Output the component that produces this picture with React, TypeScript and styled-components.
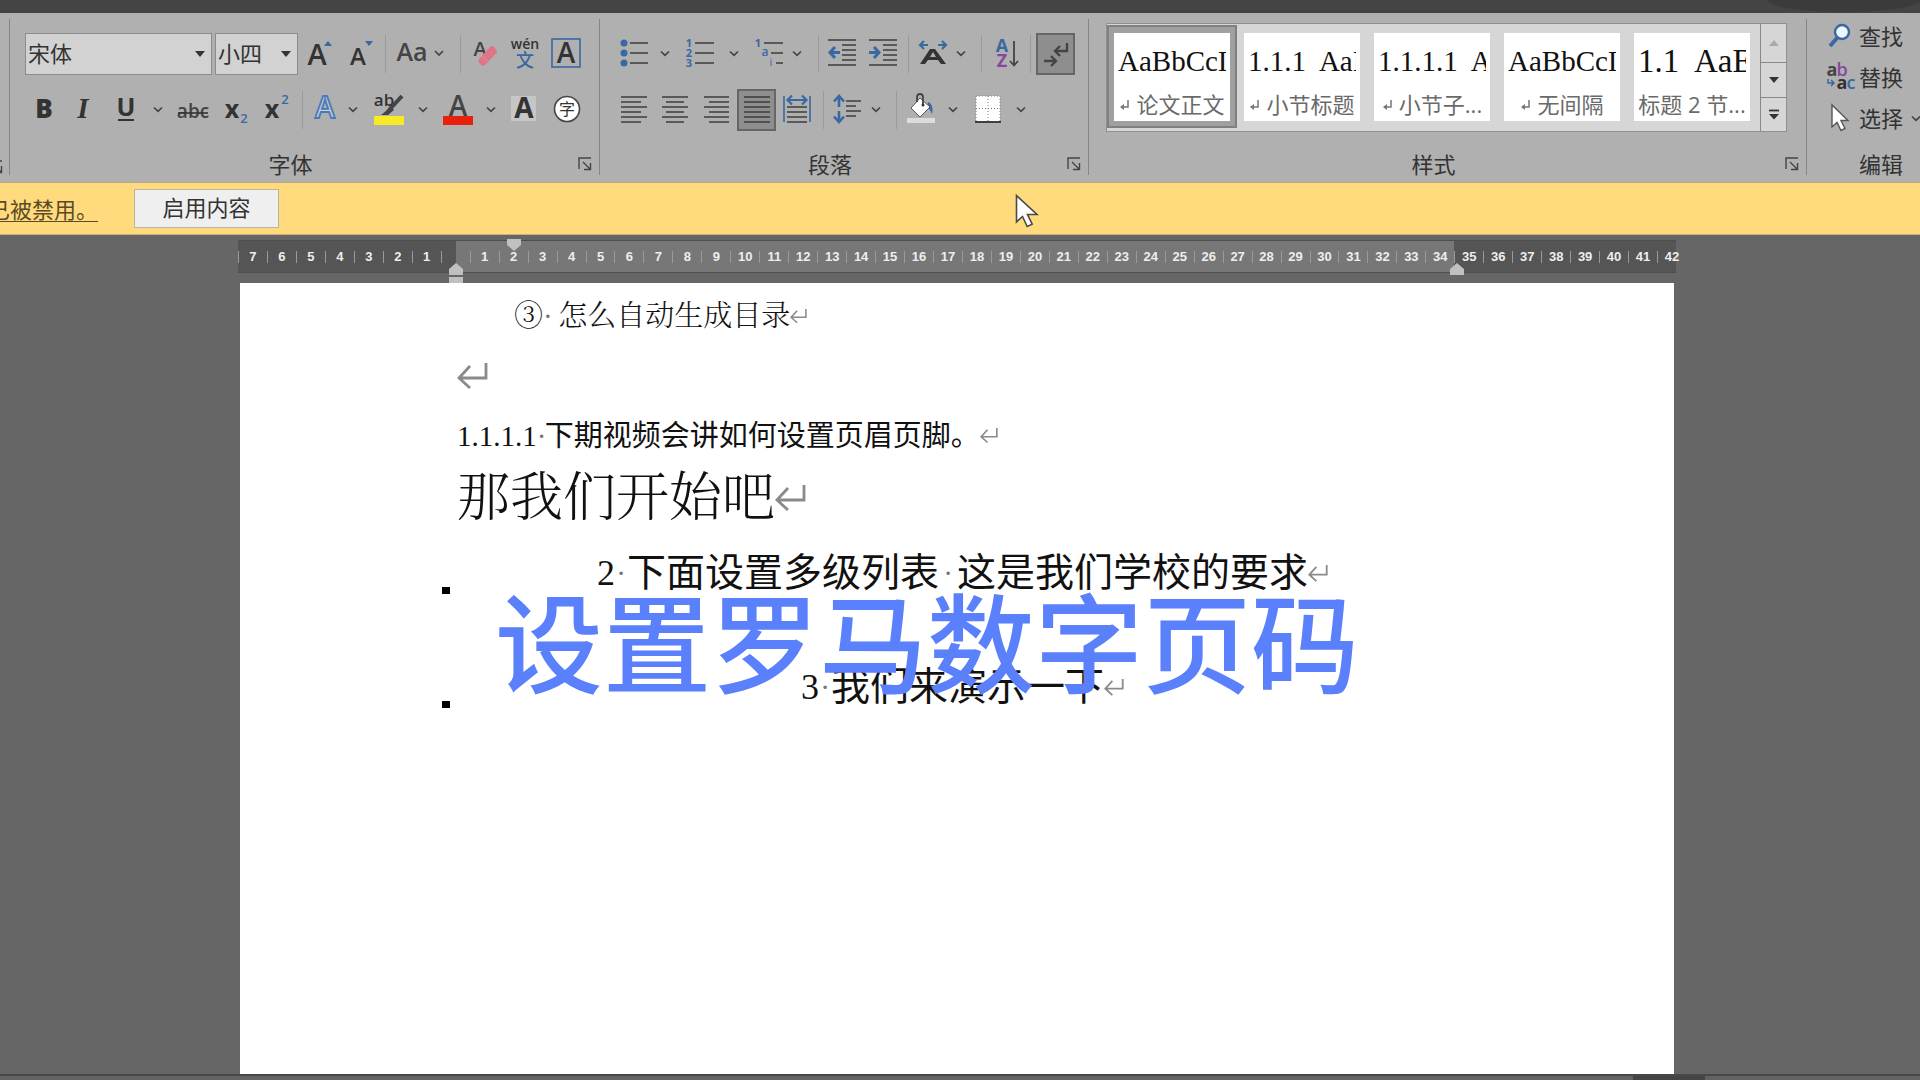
import React from 'react';
import styled, { createGlobalStyle, css } from 'styled-components';

const ui = `"Open Sans", "Noto Sans CJK SC", sans-serif`;
const serif = `"Liberation Serif", "Noto Serif CJK SC", "Noto Sans CJK SC", serif`;
const hei = `"Liberation Serif", "Noto Sans CJK SC", serif`;
const blue = '#3a68a0';
const ink = '#333';

const Global = createGlobalStyle`
  * { box-sizing: border-box; }
  body { margin: 0; background: #666; font-family: ${ui}; color: ${ink}; }
  button, select { font: inherit; color: inherit; padding: 0; margin: 0; border: 0; background: none; border-radius: 0; }
  svg { display: block; flex: none; overflow: visible; }
`;

const App_ = styled.div`
  display: flex;
  flex-direction: column;
  min-height: 100vh;
  overflow: hidden;
`;

const TitleBar = styled.header`
  display: flex;
  justify-content: flex-end;
  height: 13px;
  background: #444;
`;

const TitleShade = styled.div`
  width: 152px;
  height: 12px;
  background: #3b3b3b;
  border-radius: 0 0 76px 76px / 0 0 12px 12px;
`;

const Ribbon = styled.div`
  display: flex;
  padding: 6px 0 7px;
  background: #b0b0b0;
  border-bottom: 1px solid #b9a888;
  overflow: hidden;
`;

const Group = styled.section<{ $grow?: boolean }>`
  display: flex;
  flex-direction: column;
  flex: ${p => (p.$grow ? '1 0 auto' : '0 0 auto')};
  min-height: 156px;
  border-right: ${p => (p.$grow ? '0' : '1px solid #858585')};
`;

const PreviousGroup = styled(Group)`
  width: 10px;
  align-items: flex-end;
  justify-content: flex-end;
  padding: 0 6px 1px 0;
`;

const Tools = styled.div<{ $pad: string }>`
  display: flex;
  flex-direction: column;
  gap: 14px;
  padding: ${p => p.$pad};
`;

const Row = styled.div`
  display: flex;
  align-items: stretch;
  height: 42px;
`;

const Footer = styled.footer`
  display: flex;
  align-items: center;
  height: 22px;
  margin-top: auto;
  font-size: 22px;
  line-height: 22px;
  text-align: center;
`;

const FooterLabel = styled.span`
  flex: 1;
`;

const LauncherButton = styled.button`
  display: flex;
  justify-content: center;
  width: 28px;
`;

const Tool = styled.button<{ $w: number; $on?: boolean }>`
  display: flex;
  align-items: center;
  justify-content: center;
  flex: none;
  width: ${p => p.$w}px;
  padding-bottom: 2px;
  ${p => p.$on && css`
    background: #8e8e8e;
    border: 2px solid #666;
  `}
`;

const Sep = styled.span<{ $l: number; $r: number }>`
  flex: none;
  width: 1px;
  height: 38px;
  align-self: center;
  margin: 0 ${p => p.$r}px 0 ${p => p.$l}px;
  background: #9b9b9b;
`;

const Combo = styled.label<{ $w: number }>`
  display: flex;
  align-items: center;
  width: ${p => p.$w}px;
  padding-right: 6px;
  border: 1px solid #8c8c8c;
  background: #d2d2d2;
  & + & { margin-left: 3px; }
`;

const ComboSelect = styled.select`
  appearance: none;
  flex: 1;
  min-width: 0;
  height: 40px;
  padding: 0 0 2px 2px;
  font-size: 22px;
  outline: none;
`;

const Gallery = styled.div`
  display: flex;
  height: 109px;
  border: 1px solid #909090;
  background: #d6d6d6;
`;

const StyleItem = styled.button<{ $on?: boolean }>`
  width: 130px;
  height: 103px;
  margin-top: 1px;
  padding: 5px;
  border: 2px solid ${p => (p.$on ? '#808080' : 'transparent')};
  background: ${p => (p.$on ? '#a0a0a0' : 'transparent')};
`;

const StyleCard = styled.span`
  display: flex;
  flex-direction: column;
  height: 88px;
  padding: 0 4px;
  background: #fff;
  overflow: hidden;
`;

const Sample = styled.span<{ $big?: boolean }>`
  height: 55px;
  overflow: hidden;
  white-space: pre;
  text-align: left;
  font-family: "Liberation Serif", serif;
  font-size: ${p => (p.$big ? 33 : 29)}px;
  line-height: 57px;
  color: #111;
`;

const Caption = styled.span`
  display: flex;
  align-items: center;
  justify-content: center;
  gap: 7px;
  white-space: nowrap;
  font-size: 22px;
  line-height: 32px;
  color: #6a6a6a;
`;

const GalleryBar = styled.div`
  display: grid;
  grid-template-rows: 38px 35px 1fr;
  width: 26px;
  margin-left: 3px;
  border-left: 1px solid #888;
`;

const GalleryArrow = styled.button`
  display: flex;
  align-items: center;
  justify-content: center;
  & + & { border-top: 1px solid #888; }
`;

const EditRow = styled.button`
  display: flex;
  align-items: center;
  height: 41px;
  padding: 0 0 7px 19px;
  font-size: 22px;
  line-height: 32px;
  white-space: nowrap;
`;

const EditIcon = styled.span`
  width: 33px;
`;

const EditChevron = styled.span`
  margin-left: 8px;
`;

const EditFooter = styled(Footer)`
  padding-left: 52px;
`;

const Notice = styled.div`
  position: relative;
  display: flex;
  align-items: center;
  height: 52px;
  background: #ffdb7e;
  border-bottom: 1px solid #c9b27a;
  font-size: 22px;
  overflow: hidden;
`;

const NoticeLink = styled.a`
  width: 98px;
  display: flex;
  justify-content: flex-end;
  padding-bottom: 2px;
  white-space: nowrap;
  color: #5a4a25;
  text-decoration: underline;
  text-underline-offset: 3px;
  text-decoration-thickness: 1px;
`;

const EnableButton = styled.button`
  width: 145px;
  height: 39px;
  margin-left: 36px;
  padding-bottom: 5px;
  border: 1px solid #b9b4a4;
  background: #efefef;
`;

const Pointer = styled.span`
  position: absolute;
  left: 1015px;
  top: 11px;
`;

const Desk = styled.main`
  display: flex;
  flex: 1;
  flex-direction: column;
  align-items: center;
  padding: 5px 6px 0 0;
`;

const Ruler = styled.div`
  position: relative;
  width: 1438px;
  height: 33px;
  margin-bottom: 10px;
  border: solid #4e4e4e;
  border-width: 1px 0;
  background: linear-gradient(90deg, #555 218px, #777 218px, #777 1216px, #555 1216px);
`;

const Scale = styled.div`
  display: grid;
  grid-template-columns: repeat(50, 1fr);
  width: 1448px;
  padding-top: 10px;
`;

const Mark = styled.span`
  height: 12px;
  border-left: 1px solid #9a9a9a;
  font-family: "Liberation Sans", sans-serif;
  font-weight: bold;
  font-size: 13px;
  line-height: 12px;
  text-align: center;
  color: #eee;
`;

const Marker = styled.svg<{ $x: number; $y: number }>`
  position: absolute;
  left: ${p => p.$x}px;
  top: ${p => p.$y}px;
`;

const Page = styled.article`
  position: relative;
  flex: 1;
  width: 1434px;
  padding: 3px 220px 0 217px;
  background: #fff;
  font-family: ${serif};
  color: #111;
`;

const Para = styled.p<{ $size: number; $indent?: number; $top?: number; $hei?: boolean; $light?: boolean }>`
  display: flex;
  align-items: center;
  height: 60px;
  margin: ${p => p.$top || 0}px 0 0;
  padding-left: ${p => p.$indent || 0}px;
  white-space: pre;
  font-family: ${p => (p.$hei ? hei : serif)};
  font-size: ${p => p.$size}px;
  line-height: 60px;
  font-weight: ${p => (p.$light ? 300 : 400)};
`;

const Heading = styled.h2<{ $top: number }>`
  display: flex;
  height: 60px;
  margin: ${p => p.$top}px 0 0;
  font-family: ${hei};
  font-size: 39px;
  font-weight: 400;
  line-height: 60px;
  white-space: pre;
  &::before {
    content: '';
    width: 8px;
    height: 7px;
    margin: 0 7px 9px -15px;
    align-self: flex-end;
    background: #000;
  }
`;

const HeadingText = styled.span`
  display: flex;
  flex: 1;
  align-items: center;
  justify-content: center;
  padding-left: 14px;
`;

const HeadingDigit = styled.span`
  font-size: 36px;
`;

const Dot = styled.span<{ $w?: number }>`
  width: ${p => p.$w || 8}px;
  text-align: center;
  font-size: 29px;
  color: #777;
`;

const Title = styled.div`
  position: absolute;
  left: 255px;
  top: 301px;
  white-space: nowrap;
  font-family: "Noto Sans CJK SC", sans-serif;
  font-weight: 500;
  font-size: 108px;
  line-height: 108px;
  color: #5b80fc;
`;

const StatusBar = styled.footer`
  display: flex;
  justify-content: flex-end;
  height: 6px;
  padding-right: 215px;
  border-top: 2px solid #484848;
  background: #636363;
`;

const StatusThumb = styled.div`
  width: 72px;
  background: #444;
`;

/* ---------- icons ---------- */

const T = ({ x, y, s, c = ink, w = 400, a = 'middle', children, f = 'Open Sans, Noto Sans CJK SC, sans-serif', i }: any) => (
  <text x={x} y={y} fontSize={s} fill={c} fontWeight={w} textAnchor={a} fontFamily={f} fontStyle={i ? 'italic' : undefined}>{children}</text>
);

const Icon = ({ w = 30, h = 32, children }: any) => (
  <svg width={w} height={h} viewBox={`0 0 ${w} ${h}`} fill="none" stroke="none" aria-hidden="true">{children}</svg>
);

const Chevron = () => (
  <svg width="10" height="7" viewBox="0 0 10 7" fill="none" aria-hidden="true"><path d="M1 1.5 5 5.3 9 1.5" stroke="#444" strokeWidth="1.7" /></svg>
);

const Triangle = ({ c = ink, up }: { c?: string; up?: boolean }) => (
  <svg width="10" height="6" viewBox="0 0 10 6" aria-hidden="true"><path d={up ? 'M0 6h10L5 0z' : 'M0 0h10L5 6z'} fill={c} /></svg>
);

const Lines = ({ d }: { d: string }) => <path d={d} stroke="#3c3c3c" strokeWidth="1.6" />;

const Launcher = () => (
  <svg width="14" height="14" viewBox="0 0 14 14" fill="none" stroke="#444" strokeWidth="1.4" aria-hidden="true">
    <path d="M1 12V1h12M5 5l7 7M12.5 6v6.5H6" />
  </svg>
);

const Return = ({ w, c = '#8a8a8a' }: { w: number; c?: string }) => (
  <svg width={w} height={w * 0.84} viewBox="0 0 31 26" fill="none" stroke={c} strokeWidth="2.8" aria-hidden="true">
    <path d="M29 0v15H2M13 3 2 15l11 10" />
  </svg>
);

const SmallReturn = () => (
  <svg width="10" height="12" viewBox="0 0 10 12" fill="none" stroke="#777" strokeWidth="1.5" aria-hidden="true">
    <path d="M9 2v7H2" /><path d="M5 6v6L1 9z" fill="#777" stroke="none" />
  </svg>
);

const ChevronTool = ({ w = 20, label }: { w?: number; label: string }) => (
  <Tool $w={w} aria-label={label}><Chevron /></Tool>
);

const AlignLines = ({ l, r, sl, sr }: { l: number; r: number; sl: number; sr: number }) => (
  <Icon w={26} h={28}>
    <Lines d={[0, 1, 2, 3, 4, 5].map(n => `M${n % 2 ? sl : l} ${2 + n * 5}H${n % 2 ? sr : r}`).join('')} />
  </Icon>
);

const styles = [
  { sample: 'AaBbCcI', name: '论文正文', mark: true, on: true },
  { sample: '1.1.1  AaI', name: '小节标题', mark: true },
  { sample: '1.1.1.1  A', name: '小节子...', mark: true },
  { sample: 'AaBbCcI', name: '无间隔', mark: true },
  { sample: '1.1  AaE', name: '标题 2 节...', big: true },
];

const scale = Array.from({ length: 50 }, (_, n) => (n === 7 ? '' : String(Math.abs(n - 7))));

const ArrowPointer = ({ w, h }: { w: number; h: number }) => (
  <svg width={w} height={h} viewBox="0 0 24 34" aria-hidden="true">
    <path d="M1.500 1.500V28l6-5.500 4.700 10 5-2.300-4.700-9.700H22z" fill="#fff" stroke="#4a4a4a" strokeWidth="1.6" />
  </svg>
);

export default function App() {
  return (
    <App_>
      <Global />
      <TitleBar><TitleShade /></TitleBar>
      <Ribbon>
        <PreviousGroup><Launcher /></PreviousGroup>

        <Group>
          <Tools $pad="14px 11px 0 15px">
            <Row>
              <Combo $w={187}>
                <ComboSelect aria-label="字体"><option>宋体</option></ComboSelect><Triangle />
              </Combo>
              <Combo $w={83}>
                <ComboSelect aria-label="字号"><option>小四</option></ComboSelect><Triangle />
              </Combo>
              <Tool $w={46} aria-label="增大字号">
                <Icon w={26}><T x={9} y={28} s={29} w={600}>A</T><path d="M16 9h8l-4-5z" fill={blue} /></Icon>
              </Tool>
              <Tool $w={36} aria-label="减小字号">
                <Icon w={24}><T x={8} y={28} s={24} w={600}>A</T><path d="M15 4h8l-4 5z" fill={blue} /></Icon>
              </Tool>
              <Sep $l={5} $r={4} />
              <Tool $w={66} aria-label="更改大小写">
                <Icon w={52}><T x={15} y={24} s={25} w={600} c="#444">Aa</T><path d="M38 14l4 4 4-4" stroke="#444" strokeWidth="1.7" /></Icon>
              </Tool>
              <Sep $l={4} $r={4} />
              <Tool $w={41} aria-label="清除格式">
                <Icon w={26}>
                  <T x={7} y={19} s={20} w={600} c="#444">A</T>
                  <path d="M6 22 17 10q2-2 4 0l2 2.500q2 2 0 4L12 28q-2 1.500-4 0l-2-2.500q-1.500-2 0-3.500z" fill="#e07585" />
                  <path d="m9 19 7 6" stroke="#c9a0a8" />
                </Icon>
              </Tool>
              <Tool $w={38} aria-label="拼音指南">
                <Icon w={30} h={34}><T x={15} y={13} s={14} w={600}>wén</T><T x={15} y={31} s={18} c={blue} w={500}>文</T></Icon>
              </Tool>
              <Tool $w={44} aria-label="字符边框">
                <Icon w={30} h={30}><rect x="1" y="1" width="28" height="28" stroke={blue} strokeWidth="1.6" /><T x={15} y={25} s={28} w={600}>A</T></Icon>
              </Tool>
            </Row>
            <Row>
              <Tool $w={37} aria-label="加粗"><Icon><T x={15} y={25} s={26} w={800}>B</T></Icon></Tool>
              <Tool $w={42} aria-label="倾斜"><Icon><T x={15} y={25} s={29} w={700} f="Liberation Serif, serif" i>I</T></Icon></Tool>
              <Tool $w={44} aria-label="下划线"><Icon><T x={15} y={23} s={25} w={700}>U</T><path d="M7 27h16" stroke={ink} strokeWidth="2" /></Icon></Tool>
              <ChevronTool label="下划线选项" />
              <Tool $w={50} aria-label="删除线"><Icon w={32}><T x={16} y={25} s={19} w={600} c="#444">abc</T><path d="M1 20h30" stroke={ink} strokeWidth="1.6" /></Icon></Tool>
              <Tool $w={38} aria-label="下标"><Icon w={26}><T x={8} y={25} s={25} w={700}>x</T><T x={20} y={30} s={13} c={blue} w={600}>2</T></Icon></Tool>
              <Tool $w={42} aria-label="上标"><Icon w={26}><T x={8} y={25} s={25} w={700}>x</T><T x={21} y={11} s={13} c={blue} w={600}>2</T></Icon></Tool>
              <Sep $l={4} $r={4} />
              <Tool $w={36} aria-label="文本效果">
                <Icon><text x="15" y="25" fontSize="30" fontWeight="600" textAnchor="middle" fontFamily="Open Sans, sans-serif" fill="#c6cfda" stroke="#4a7ab5" strokeWidth="1.8">A</text></Icon>
              </Tool>
              <ChevronTool label="文本效果选项" />
              <Tool $w={50} aria-label="突出显示">
                <Icon w={28} h={34}>
                  <T x={10} y={14} s={17} w={600}>ab</T>
                  <path d="M28 4 17 16" stroke="#444" strokeWidth="4" /><path d="m16 14 4 4-6 5H7q5-3 9-9z" fill="#444" />
                  <path d="M0 24h30v9H0z" fill="#f8ea25" />
                </Icon>
              </Tool>
              <ChevronTool label="突出显示颜色" />
              <Tool $w={48} aria-label="字体颜色">
                <Icon w={28} h={34}><T x={15} y={24} s={28} w={600} c="#444">A</T><path d="M0 24h30v9H0z" fill="#e8210c" /></Icon>
              </Tool>
              <ChevronTool label="字体颜色选项" />
              <Tool $w={46} aria-label="字符底纹">
                <Icon w={26} h={28}><path d="M0 1h25v25H0z" fill="#c6c6c6" /><T x={13} y={23} s={28} w={700}>A</T></Icon>
              </Tool>
              <Tool $w={40} aria-label="带圈字符">
                <Icon w={28} h={28}><circle cx="14" cy="14" r="12.500" fill="#fff" stroke="#444" strokeWidth="1.6" /><T x={14} y={20} s={16}>字</T></Icon>
              </Tool>
            </Row>
          </Tools>
          <Footer><FooterLabel>字体</FooterLabel><LauncherButton aria-label="字体设置"><Launcher /></LauncherButton></Footer>
        </Group>

        <Group>
          <Tools $pad="14px 13px 0 14px">
            <Row>
              <Tool $w={40} aria-label="项目符号">
                <Icon w={28}>
                  <g fill={blue}><circle cx="4" cy="6" r="3.500" /><circle cx="4" cy="16" r="3.500" /><circle cx="4" cy="26" r="3.500" /></g>
                  <Lines d="M10 6h18M10 16h18M10 26h18" />
                </Icon>
              </Tool>
              <ChevronTool w={22} label="项目符号选项" />
              <Tool $w={48} aria-label="编号">
                <Icon w={28}><T x={3} y={10} s={11} c={blue} w={700}>1</T><T x={3} y={20} s={11} c={blue} w={700}>2</T><T x={3} y={30} s={11} c={blue} w={700}>3</T><Lines d="M9 6h19M9 16h19M9 26h19" /></Icon>
              </Tool>
              <ChevronTool label="编号选项" />
              <Tool $w={43} aria-label="多级列表">
                <Icon w={34}><T x={9} y={10} s={11} c={blue} w={700}>1</T><T x={16} y={19} s={12} c={blue} w={600}>a</T><T x={22} y={29} s={11} c={blue}>i</T><Lines d="M15 6h19M22 16h12M27 26h7" /></Icon>
              </Tool>
              <ChevronTool label="多级列表选项" />
              <Sep $l={11} $r={3} />
              <Tool $w={40} aria-label="减少缩进量">
                <Icon w={28}><Lines d="M0 3h28M14 8h14M14 13h14M14 18h14M14 23h14M0 28h28" /><path d="M12 15.500H2M7 10l-5 5.500L7 21" stroke={blue} strokeWidth="3" /></Icon>
              </Tool>
              <Tool $w={42} aria-label="增加缩进量">
                <Icon w={28}><Lines d="M0 3h28M14 8h14M14 13h14M14 18h14M14 23h14M0 28h28" /><path d="M0 15.500h10M5 10l5 5.500L5 21" stroke={blue} strokeWidth="3" /></Icon>
              </Tool>
              <Sep $l={4} $r={4} />
              <Tool $w={40} aria-label="中文版式">
                <Icon w={30}>
                  <path d="M2 27 12 12h5l11 15h-5l-3-4H10l-3 4zm10-7h6l-3-5z" fill={ink} fillRule="evenodd" />
                  <path d="M10 8H2M6 4 2 8l4 4M20 8h8M24 4l4 4-4 4" stroke={blue} strokeWidth="2.200" />
                </Icon>
              </Tool>
              <ChevronTool w={16} label="中文版式选项" />
              <Sep $l={12} $r={5} />
              <Tool $w={40} aria-label="排序">
                <Icon w={26}><T x={8} y={15} s={18} c={blue} w={700}>A</T><T x={8} y={30} s={18} c="#86479c" w={700}>Z</T><path d="M20 4v24M16 24l4 4.500 4-4.500" stroke="#444" strokeWidth="1.8" /></Icon>
              </Tool>
              <Sep $l={3} $r={5} />
              <Tool $w={39} $on aria-label="显示编辑标记">
                <Icon w={28}><path d="M25 6v8H13M18 9l-5 5 5 5M2 24h12M9 19l5 5-5 5" stroke="#444" strokeWidth="2.400" /></Icon>
              </Tool>
            </Row>
            <Row>
              <Tool $w={40} aria-label="左对齐"><AlignLines l={0} r={26} sl={0} sr={20} /></Tool>
              <Tool $w={42} aria-label="居中"><AlignLines l={0} r={26} sl={4} sr={22} /></Tool>
              <Tool $w={41} aria-label="右对齐"><AlignLines l={0} r={25} sl={5} sr={25} /></Tool>
              <Tool $w={39} $on aria-label="两端对齐"><AlignLines l={0} r={26} sl={0} sr={26} /></Tool>
              <Tool $w={42} aria-label="分散对齐">
                <Icon w={28} h={30}><path d="M1 2v26M27 2v26" stroke={blue} strokeWidth="1.6" /><path d="M5 6h18M9 1.500 4.500 6 9 10.500M19 1.500 23.500 6 19 10.500" stroke={blue} strokeWidth="2.200" /><Lines d="M4 13h20M4 18h20M4 23h20M4 28h20" /></Icon>
              </Tool>
              <Sep $l={5} $r={4} />
              <Tool $w={38} aria-label="行距">
                <Icon w={28} h={30}><path d="M6 3v10M1 7.500 6 2l5 5.500M6 17v10M1 22.500 6 28l5-5.500" stroke={blue} strokeWidth="2.600" /><Lines d="M13 7h15M13 12h10M13 17h15M13 22h10" /></Icon>
              </Tool>
              <ChevronTool label="行距选项" />
              <Sep $l={10} $r={4} />
              <Tool $w={40} aria-label="底纹">
                <Icon w={28}>
                  <path d="M21 9q6 2 4 12-2-5-5-7z" fill={blue} />
                  <path d="M13 5 4 15l9 9 10-10z" fill="#fff" stroke="#555" /><path d="M10 9V4q0-3 3-3t3 3v8" stroke="#444" strokeWidth="1.800" /><circle cx="16" cy="12" r="1.500" fill="#333" />
                  <path d="M0 25h28v5H0z" fill="#dcdcdc" />
                </Icon>
              </Tool>
              <ChevronTool w={24} label="底纹颜色" />
              <Tool $w={46} aria-label="边框">
                <Icon w={26} h={28}><path d="M1 1h24v25H1z" fill="#fff" /><path d="M1 1h24M1 1v25M25 1v25M13 1v25M1 13.500h24" stroke="#777" strokeDasharray="1 2" /><path d="M0 27h26" stroke="#333" strokeWidth="1.800" /></Icon>
              </Tool>
              <ChevronTool label="边框选项" />
            </Row>
          </Tools>
          <Footer><FooterLabel>段落</FooterLabel><LauncherButton aria-label="段落设置"><Launcher /></LauncherButton></Footer>
        </Group>

        <Group>
          <Tools $pad="4px 19px 0 17px">
            <Gallery>
              {styles.map((s, n) => (
                <StyleItem key={n} $on={s.on}>
                  <StyleCard>
                    <Sample $big={s.big}>{s.sample}</Sample>
                    <Caption>{s.mark && <SmallReturn />}{s.name}</Caption>
                  </StyleCard>
                </StyleItem>
              ))}
              <GalleryBar>
                <GalleryArrow aria-label="上一行"><Triangle up c="#aaa" /></GalleryArrow>
                <GalleryArrow aria-label="下一行"><Triangle /></GalleryArrow>
                <GalleryArrow aria-label="其他样式"><Icon w={12} h={12}><path d="M1 1.500h10" stroke={ink} strokeWidth="1.800" /><path d="M1 5h10l-5 5.500z" fill={ink} /></Icon></GalleryArrow>
              </GalleryBar>
            </Gallery>
          </Tools>
          <Footer><FooterLabel>样式</FooterLabel><LauncherButton aria-label="样式设置"><Launcher /></LauncherButton></Footer>
        </Group>

        <Group $grow>
          <EditRow>
            <EditIcon><Icon w={28} h={26}><path d="m12 14-8 9" stroke={blue} strokeWidth="4" /><circle cx="16" cy="9" r="7" fill="#eef6ff" stroke={blue} strokeWidth="2.400" /></Icon></EditIcon>查找
          </EditRow>
          <EditRow>
            <EditIcon><Icon w={30} h={30}><T x={6} y={14} s={18} w={700} c="#444">a</T><T x={16} y={14} s={18} w={600} c="#86479c">b</T><T x={16} y={27} s={18} w={700}>a</T><T x={25} y={27} s={18} w={600} c={blue}>c</T><path d="M2 17v4h6M5 18l3 3-3 3" stroke={blue} strokeWidth="1.500" /></Icon></EditIcon>替换
          </EditRow>
          <EditRow>
            <EditIcon><Icon w={26} h={28}><path d="M6 1v22l5-4.500 4 8 4-2-4-8h7z" fill="#fff" stroke="#555" strokeWidth="1.400" /></Icon></EditIcon>选择
            <EditChevron><Chevron /></EditChevron>
          </EditRow>
          <EditFooter>编辑</EditFooter>
        </Group>
      </Ribbon>

      <Notice>
        <NoticeLink href="#">已被禁用。</NoticeLink>
        <EnableButton>启用内容</EnableButton>
        <Pointer><ArrowPointer w={24} h={34} /></Pointer>
      </Notice>

      <Desk>
        <Ruler>
          <Scale>{scale.map((n, k) => <Mark key={k}>{n}</Mark>)}</Scale>
          <Marker $x={269} $y={-2} width="14" height="12"><path d="M0 0h14v6l-7 6-7-6z" fill="#c0c0c0" /></Marker>
          <Marker $x={211} $y={22} width="14" height="20"><path d="M0 12V6l7-6 7 6v6zM0 14h14v6H0z" fill="#c0c0c0" /></Marker>
          <Marker $x={1212} $y={22} width="14" height="12"><path d="M0 12V6l7-6 7 6v6z" fill="#c0c0c0" /></Marker>
        </Ruler>
        <Page>
          <Para $size={29} $indent={57} $light>③<Dot>·</Dot> 怎么自动生成目录<Return w={17} /></Para>
          <Para $size={29}><Return w={31} /></Para>
          <Para $size={29} $hei>1.1.1.1<Dot>·</Dot>下期视频会讲如何设置页眉页脚。<Return w={18} /></Para>
          <Para $size={53} $top={2} $light>那我们开始吧<Return w={31} /></Para>
          <Heading $top={15}>
            <HeadingText><HeadingDigit>2</HeadingDigit><Dot $w={12}>·</Dot>下面设置多级列表<Dot $w={18}>·</Dot>这是我们学校的要求<Return w={20} /></HeadingText>
          </Heading>
          <Heading $top={54}>
            <HeadingText><HeadingDigit>3</HeadingDigit><Dot $w={12}>·</Dot>我们来演示一下<Return w={20} /></HeadingText>
          </Heading>
          <Title>设置罗马数字页码</Title>
        </Page>
      </Desk>
      <StatusBar><StatusThumb /></StatusBar>
    </App_>
  );
}
